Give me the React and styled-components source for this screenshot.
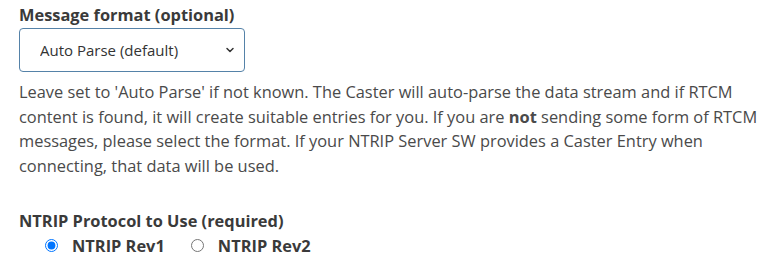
import styled, { createGlobalStyle } from "styled-components";
import { ChevronDown } from "lucide-react";

const GlobalStyle = createGlobalStyle`
  body {
    margin: 0;
    background: #fff;
    font-family: "Open Sans", "Liberation Sans", sans-serif;
    color: #444;
  }
`;

export const FormWrap = styled.div`
  padding: 3px 0 0 19px;
  width: 745px;
`;

export const FieldLabel = styled.div`
  font-size: 16.4px;
  font-weight: bold;
  line-height: 24px;
  color: #3a3a3a;
`;

export const SelectWrap = styled.div`
  position: relative;
  width: 226px;
  margin-top: 1px;
`;

export const Select = styled.select`
  appearance: none;
  width: 100%;
  height: 44px;
  padding: 0 30px 0 20px;
  border: 1.5px solid #5582a8;
  border-radius: 4px;
  background: #fff;
  font-family: inherit;
  font-size: 15px;
  color: #333;
  outline: none;
`;

export const Chevron = styled.span`
  position: absolute;
  right: 9px;
  top: 16px;
  display: flex;
  color: #333;
  pointer-events: none;
`;

export const HelpText = styled.p`
  margin: 8px 0 0;
  font-size: 16.4px;
  line-height: 24.5px;
  color: #4a4a4a;
`;

export const Section = styled.div`
  margin-top: ${(p) => p.$gap || 0}px;
`;

export const RadioRow = styled.div`
  display: flex;
  align-items: center;
  padding-left: 26px;
  height: 25px;
`;

export const RadioLabel = styled.label`
  display: flex;
  align-items: center;
  gap: 14px;
  margin-right: 26px;
  font-size: 16.4px;
  font-weight: bold;
  color: #3a3a3a;

  input {
    margin: 0;
    width: 13px;
    height: 13px;
  }
`;

const App = () => {
  return (
    <>
      <GlobalStyle />
      <FormWrap>
        <FieldLabel>Message format (optional)</FieldLabel>
        <SelectWrap>
          <Select defaultValue="auto">
            <option value="auto">Auto Parse (default)</option>
          </Select>
          <Chevron>
            <ChevronDown size={12} strokeWidth={3} />
          </Chevron>
        </SelectWrap>
        <HelpText>
          Leave set to 'Auto Parse' if not known. The Caster will auto-parse the
          data stream and if RTCM content is found, it will create suitable
          entries for you. If you are <b>not</b> sending some form of RTCM
          messages, please select the format. If your NTRIP Server SW provides a
          Caster Entry when connecting, that data will be used.
        </HelpText>
        <Section $gap={31}>
          <FieldLabel>NTRIP Protocol to Use (required)</FieldLabel>
          <RadioRow>
            <RadioLabel>
              <input type="radio" name="rev" defaultChecked />
              NTRIP Rev1
            </RadioLabel>
            <RadioLabel>
              <input type="radio" name="rev" />
              NTRIP Rev2
            </RadioLabel>
          </RadioRow>
        </Section>
      </FormWrap>
    </>
  );
};

export default App;
